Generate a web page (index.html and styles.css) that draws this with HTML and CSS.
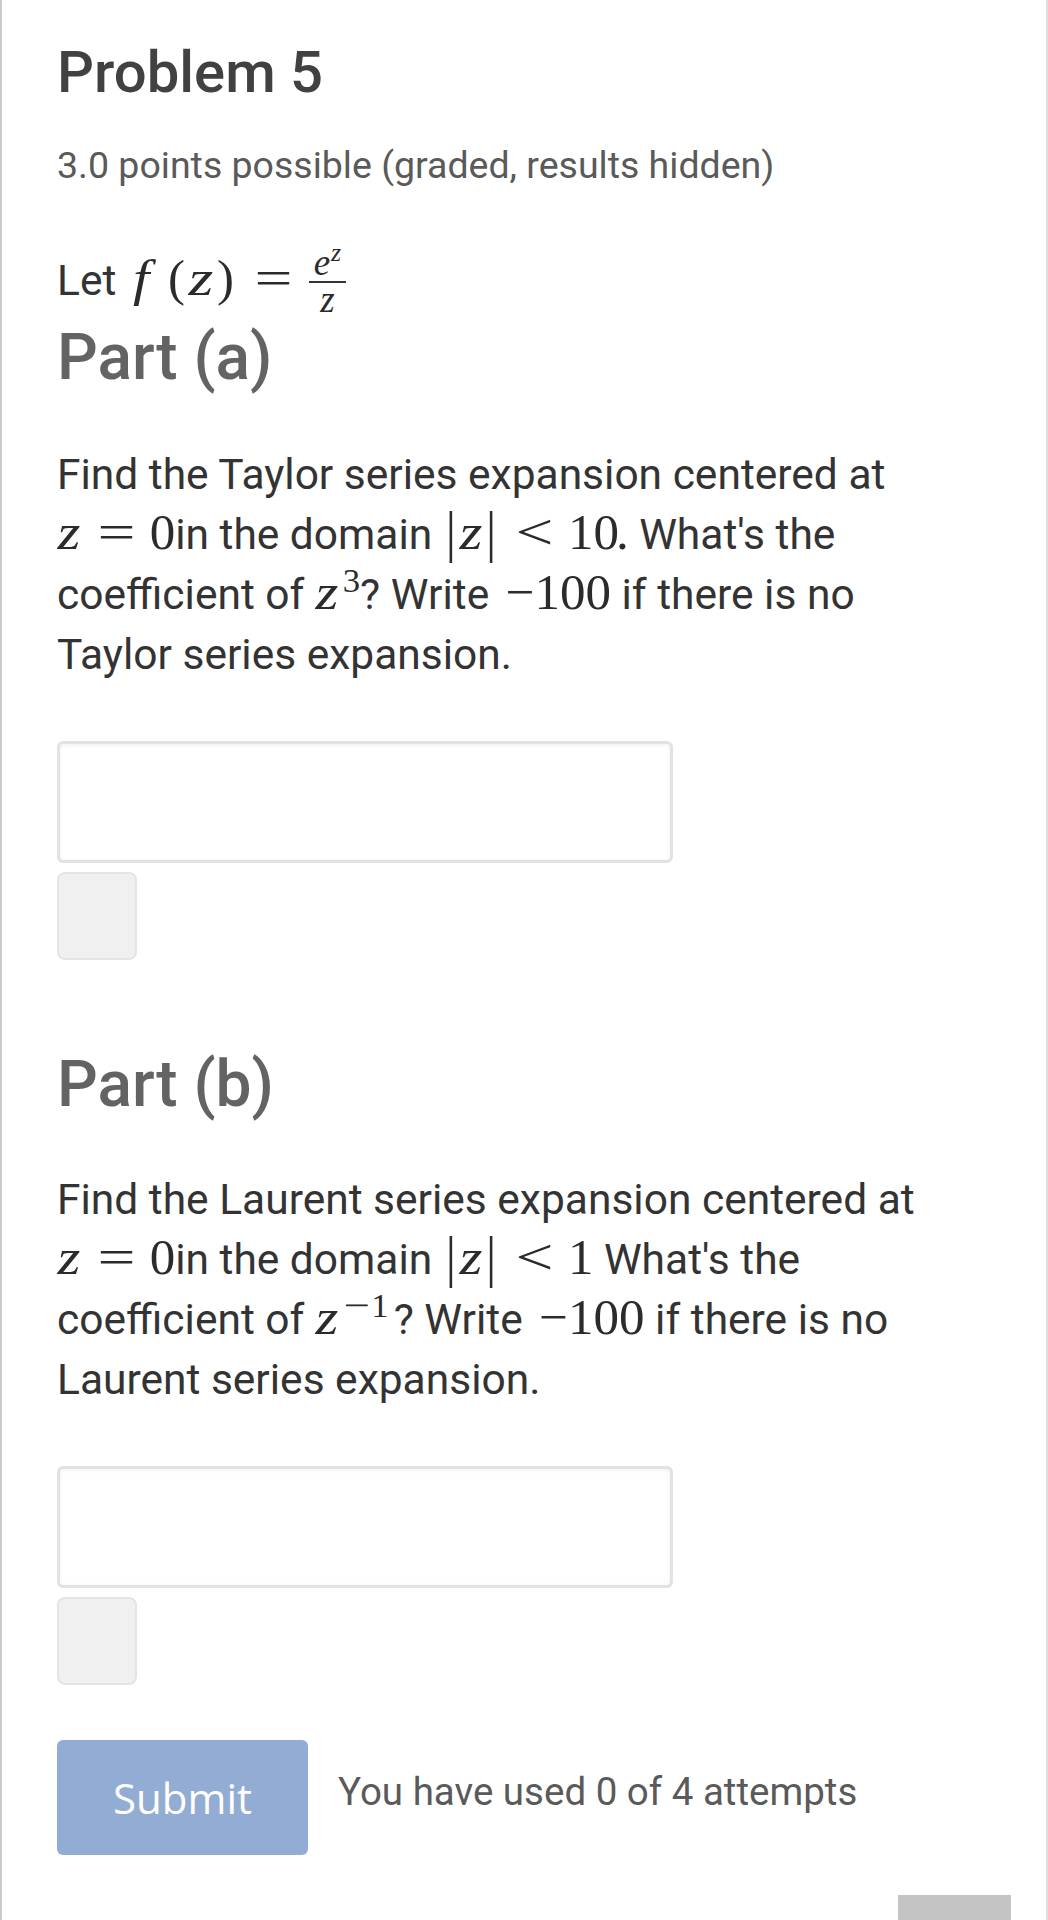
FILE: index.html
```html
<!DOCTYPE html>
<html>

<head>
    <meta charset="UTF-8">
    <title>Problem 5</title>
    <link rel="stylesheet" href="styles.css">
</head>

<body>
    <div class="problem">
        <h2 class="title">Problem 5</h2>
        <div class="points">3.0 points possible (graded, results hidden)</div>

        <p class="let">Let <span class="m lead"><i class="fn">f</i><span class="paren">(</span><i class="zz">z</i><span class="paren">)</span><span class="eq">=</span><span class="frac"><span class="num"><i>e</i><sup><i>z</i></sup></span><span class="den"><i>z</i></span></span></span></p>

        <h3 class="part">Part (a)</h3>
        <p class="question">Find the Taylor series expansion centered at<br>
            <span class="m"><i>z</i><span class="eq">=</span>0</span>in the domain <span class="m"><span class="bar">|</span><i>z</i><span class="bar">|</span><span class="eq">&lt;</span>10<span class="dot">.</span></span> What's the<br>
            coefficient of <span class="m"><i>z</i><sup>3</sup></span>? Write <span class="m neg">&minus;100</span> if there is no<br>
            Taylor series expansion.</p>
        <div class="answer"></div>
        <div class="status"></div>

        <h3 class="part part-b">Part (b)</h3>
        <p class="question">Find the Laurent series expansion centered at<br>
            <span class="m"><i>z</i><span class="eq">=</span>0</span>in the domain <span class="m"><span class="bar">|</span><i>z</i><span class="bar">|</span><span class="eq">&lt;</span>1</span> What's the<br>
            coefficient of <span class="m"><i>z</i><sup class="wide"><span class="minus">&minus;</span>1</sup></span>? Write <span class="m neg">&minus;100</span> if there is no<br>
            Laurent series expansion.</p>
        <div class="answer"></div>
        <div class="status"></div>

        <div class="actions">
            <button class="submit" type="button">Submit</button>
            <span class="attempts">You have used 0 of 4 attempts</span>
        </div>
        <div class="footer">
            <div class="more"></div>
        </div>
    </div>
</body>

</html>
```

FILE: styles.css
```css
body {
    margin: 0;
    background-color: #FFF;
    font-family: Roboto, "Liberation Sans", sans-serif;
    color: #333;
}

.problem {
    border-left: 2px solid #CCC;
    border-right: 2px solid #DDD;
    padding: 37px 0 0 55px;
    min-height: 1883px;
}

.title {
    margin: 0;
    font-size: 58px;
    line-height: 70px;
    font-weight: 500;
    color: #414141;
}

.points {
    margin-top: 36px;
    font-size: 37.5px;
    line-height: 44px;
    color: #5a5a5a;
}

.let {
    margin: 64px 0 0;
    font-size: 42.5px;
    line-height: 60px;
}

.part {
    margin: 12px 0 0;
    font-size: 64px;
    line-height: 70px;
    font-weight: 500;
    color: #636363;
}

.part-b {
    margin-top: 90px;
}

.question {
    margin: 52px 0 0;
    font-size: 42.5px;
    line-height: 60px;
    white-space: nowrap;
}

.part-b + .question {
    margin-top: 50px;
}

/* math */
.m {
    font-family: "Liberation Serif", "DejaVu Serif", serif;
    font-size: 1.2em;
    line-height: 0;
    color: #2b2b2b;
}

.m i {
    font-style: italic;
}

.m > i {
    display: inline-block;
    transform: scaleX(1.15);
    margin: 0 2px;
}

.m sup {
    font-size: 0.68em;
    line-height: 0;
    vertical-align: 17px;
    margin-left: 4px;
}

.m sup.wide {
    margin-right: 5px;
}

.minus {
    display: inline-block;
    transform: scaleX(1.35);
    margin: 0 5px 0 4px;
}

.m .eq {
    display: inline-block;
    transform: scaleX(1.32);
    margin: 0 19px 0 21px;
}

.lead {
    margin-left: 5px;
}

.m .fn {
    margin-right: 16px;
}

.m .paren {
    margin: 0 4px;
}

.m .zz {
    transform: scaleX(1.25);
}

.m .bar {
    font-style: normal;
    margin: 0 3px;
    transform: scaleY(1.1);
    display: inline-block;
}

.m .dot {
    margin-left: -3px;
}

.neg {
    margin-left: 6px;
}

.frac {
    display: inline-flex;
    flex-direction: column;
    align-items: center;
    vertical-align: 20px;
    font-size: 37px;
    line-height: 30px;
    margin: -20px 0 -25px 2px;
}

.frac .num {
    border-bottom: 2px solid #333;
    padding: 0 5px 3px;
}

.frac .den {
    padding-top: 2px;
}

.frac sup {
    font-size: 0.7em;
    vertical-align: 14px;
    margin-left: 1px;
}

.answer {
    margin-top: 56px;
    width: 610px;
    height: 116px;
    border: 3px solid #e2e2e2;
    border-radius: 6px;
    box-shadow: inset 0 1px 4px rgba(0, 0, 0, 0.07);
    background-color: #FFF;
}

.status {
    margin-top: 9px;
    width: 76px;
    height: 84px;
    border: 2px solid #e4e4e4;
    border-radius: 8px;
    background-color: #f0f0f0;
}

.actions {
    display: flex;
    margin-top: 55px;
}

.submit {
    width: 251px;
    height: 115px;
    border: none;
    border-radius: 6px;
    background-color: #92acd4;
    color: #FFF;
    font-family: "Open Sans", sans-serif;
    font-size: 42px;
    padding: 0;
}

.attempts {
    margin-left: 30px;
    padding-top: 30px;
    font-size: 38.5px;
    line-height: 44px;
    color: #5a5a5a;
}

.footer {
    display: flex;
    justify-content: flex-end;
    margin-top: 40px;
    padding-right: 35px;
}

.more {
    width: 113px;
    height: 30px;
    background-color: #c4c4c4;
}
```
